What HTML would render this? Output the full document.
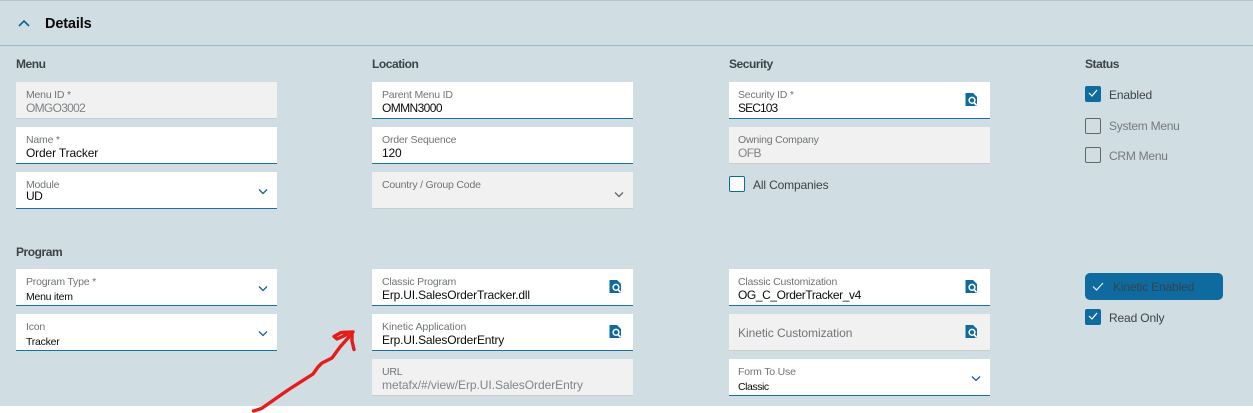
<!DOCTYPE html>
<html>
<head>
<meta charset="utf-8">
<style>
html,body{margin:0;padding:0;background:#fff;}
#p{position:relative;width:1253px;height:413px;overflow:hidden;background:#fff;font-family:"Liberation Sans",sans-serif;}
#bg{position:absolute;left:0;top:0;width:1253px;height:406px;background:#d0dde2;border-top:1px solid #b4c6ce;box-sizing:border-box;}
#hl{position:absolute;left:0;top:45px;width:1253px;height:1px;background:#9dbcc9;}
.t{position:absolute;white-space:nowrap;}
.h{font-size:12px;font-weight:bold;color:#3c4448;line-height:14px;letter-spacing:-.45px;}
.f{position:absolute;width:261px;height:37px;box-sizing:border-box;background:#fff;border-bottom:1px solid #1a6fa3;}
.f.d{background:#f1f1f1;border-bottom:1px solid #c9cccd;}
.l{position:absolute;left:10px;top:7px;font-size:10.5px;line-height:12px;color:#6f7477;white-space:nowrap;letter-spacing:-.2px;}
.v{position:absolute;left:10px;top:19px;font-size:12px;line-height:14px;color:#0c0c0c;white-space:nowrap;letter-spacing:-.18px;}
.c3 .l,.c3 .v{left:9px;}
.d .v{color:#808487;}
.s{font-size:10.5px;top:21px;letter-spacing:-.25px;}
svg.c{position:absolute;right:9px;top:16px;width:10px;height:7px;}
svg.q{position:absolute;right:13px;top:10px;width:12px;height:15px;}
.cb{position:absolute;width:16px;height:16px;box-sizing:border-box;border-radius:2px;}
.cb.on{background:#0f6a9f;}
.cb.off{border:1px solid #666;}
.cb.blue{border:1px solid #0f6a9f;background:#fff;}
.cb svg{position:absolute;left:3px;top:3px;width:10px;height:8px;}
.lb{position:absolute;font-size:12px;line-height:14px;color:#3d4347;white-space:nowrap;letter-spacing:-.15px;}
.lb.g{color:#75797c;letter-spacing:-.25px;}
</style>
</head>
<body>
<div id="p">
<div id="bg"></div>
<div id="hl"></div>
<svg style="position:absolute;left:18px;top:19px" width="12" height="8" viewBox="0 0 12 8"><path d="M1 7L6 2L11 7" fill="none" stroke="#14638f" stroke-width="1.6"/></svg>
<div class="t" style="left:45px;top:15px;font-size:14.5px;line-height:18px;font-weight:bold;color:#0a0a0a;letter-spacing:-.15px;">Details</div>

<div class="t h" style="left:16px;top:57px;">Menu</div>
<div class="t h" style="left:372px;top:57px;">Location</div>
<div class="t h" style="left:729px;top:57px;">Security</div>
<div class="t h" style="left:1085px;top:57px;">Status</div>
<div class="t h" style="left:16px;top:245px;">Program</div>

<div class="f d" style="left:16px;top:82px;"><div class="l">Menu ID *</div><div class="v" style="letter-spacing:-.7px">OMGO3002</div></div>
<div class="f" style="left:16px;top:127px;"><div class="l">Name *</div><div class="v" style="letter-spacing:-.15px">Order Tracker</div></div>
<div class="f" style="left:16px;top:172px;"><div class="l">Module</div><div class="v" style="top:17px;letter-spacing:-.6px">UD</div><svg class="c" viewBox="0 0 10 7"><path d="M1 1.500L5 5.500L9 1.500" fill="none" stroke="#14638f" stroke-width="1.300"/></svg></div>

<div class="f" style="left:372px;top:82px;"><div class="l">Parent Menu ID</div><div class="v" style="letter-spacing:-.6px">OMMN3000</div></div>
<div class="f" style="left:372px;top:127px;"><div class="l">Order Sequence</div><div class="v">120</div></div>
<div class="f d" style="left:372px;top:172px;"><div class="l">Country / Group Code</div><svg class="c" style="top:19px" viewBox="0 0 10 7"><path d="M1 1.500L5 5.500L9 1.500" fill="none" stroke="#666" stroke-width="1.300"/></svg></div>

<div class="f c3" style="left:729px;top:82px;"><div class="l">Security ID *</div><div class="v" style="letter-spacing:-.9px">SEC103</div><svg class="q" viewBox="0 0 12 15"><path d="M0.500 1H8L12 5V14H0.500Z" fill="#0f6a9f"/><circle cx="7" cy="8.300" r="2.900" fill="#0f6a9f" stroke="#fff" stroke-width="1.500"/><path d="M9 10.500L11.700 13.400" stroke="#fff" stroke-width="1.700"/></svg></div>
<div class="f d c3" style="left:729px;top:127px;"><div class="l">Owning Company</div><div class="v" style="letter-spacing:-.6px">OFB</div></div>

<div class="cb blue" style="left:729px;top:176px;"></div>
<div class="lb" style="left:753px;top:178px;">All Companies</div>

<div class="cb on" style="left:1085px;top:86px;"><svg viewBox="0 0 10 8"><path d="M1 4L4 7L9 1" fill="none" stroke="#fff" stroke-width="1.200"/></svg></div>
<div class="lb" style="left:1109px;top:88px;">Enabled</div>
<div class="cb off" style="left:1085px;top:118px;"></div>
<div class="lb g" style="left:1109px;top:119px;">System Menu</div>
<div class="cb off" style="left:1085px;top:147px;"></div>
<div class="lb g" style="left:1109px;top:149px;">CRM Menu</div>

<div class="f" style="left:16px;top:269px;"><div class="l">Program Type *</div><div class="v s">Menu item</div><svg class="c" viewBox="0 0 10 7"><path d="M1 1.500L5 5.500L9 1.500" fill="none" stroke="#14638f" stroke-width="1.300"/></svg></div>
<div class="f" style="left:16px;top:314px;"><div class="l">Icon</div><div class="v s">Tracker</div><svg class="c" viewBox="0 0 10 7"><path d="M1 1.500L5 5.500L9 1.500" fill="none" stroke="#14638f" stroke-width="1.300"/></svg></div>

<div class="f" style="left:372px;top:269px;"><div class="l">Classic Program</div><div class="v">Erp.UI.SalesOrderTracker.dll</div><svg class="q" style="right:12px" viewBox="0 0 12 15"><path d="M0.500 1H8L12 5V14H0.500Z" fill="#0f6a9f"/><circle cx="7" cy="8.300" r="2.900" fill="#0f6a9f" stroke="#fff" stroke-width="1.500"/><path d="M9 10.500L11.700 13.400" stroke="#fff" stroke-width="1.700"/></svg></div>
<div class="f" style="left:372px;top:314px;"><div class="l" style="letter-spacing:-.05px">Kinetic Application</div><div class="v">Erp.UI.SalesOrderEntry</div><svg class="q" style="right:12px" viewBox="0 0 12 15"><path d="M0.500 1H8L12 5V14H0.500Z" fill="#0f6a9f"/><circle cx="7" cy="8.300" r="2.900" fill="#0f6a9f" stroke="#fff" stroke-width="1.500"/><path d="M9 10.500L11.700 13.400" stroke="#fff" stroke-width="1.700"/></svg></div>
<div class="f d" style="left:372px;top:359px;"><div class="l">URL</div><div class="v" style="letter-spacing:-.05px">metafx/#/view/Erp.UI.SalesOrderEntry</div></div>

<div class="f c3" style="left:729px;top:269px;"><div class="l">Classic Customization</div><div class="v" style="letter-spacing:-.4px">OG_C_OrderTracker_v4</div><svg class="q" viewBox="0 0 12 15"><path d="M0.500 1H8L12 5V14H0.500Z" fill="#0f6a9f"/><circle cx="7" cy="8.300" r="2.900" fill="#0f6a9f" stroke="#fff" stroke-width="1.500"/><path d="M9 10.500L11.700 13.400" stroke="#fff" stroke-width="1.700"/></svg></div>
<div class="f d c3" style="left:729px;top:314px;"><div class="v" style="top:12px;color:#6f7477;letter-spacing:-.05px;">Kinetic Customization</div><svg class="q" viewBox="0 0 12 15"><path d="M0.500 1H8L12 5V14H0.500Z" fill="#0f6a9f"/><circle cx="7" cy="8.300" r="2.900" fill="#0f6a9f" stroke="#fff" stroke-width="1.500"/><path d="M9 10.500L11.700 13.400" stroke="#fff" stroke-width="1.700"/></svg></div>
<div class="f c3" style="left:729px;top:359px;"><div class="l">Form To Use</div><div class="v s" style="letter-spacing:-.45px">Classic</div><svg class="c" viewBox="0 0 10 7"><path d="M1 1.500L5 5.500L9 1.500" fill="none" stroke="#14638f" stroke-width="1.300"/></svg></div>

<div style="position:absolute;left:1085px;top:273px;width:138px;height:27px;border-radius:5px;background:#0f6a9f;"></div>
<svg style="position:absolute;left:1092px;top:282px" width="12" height="9" viewBox="0 0 12 9"><path d="M1 4.500L4.500 8L11 1" fill="none" stroke="#e8f1f5" stroke-width="1.200"/></svg>
<div class="lb" style="left:1113px;top:280px;color:#33454f;">Kinetic Enabled</div>
<div class="cb on" style="left:1085px;top:309px;"><svg viewBox="0 0 10 8"><path d="M1 4L4 7L9 1" fill="none" stroke="#fff" stroke-width="1.200"/></svg></div>
<div class="lb" style="left:1109px;top:311px;">Read Only</div>

<svg style="position:absolute;left:0;top:0" width="1253" height="413" viewBox="0 0 1253 413">
<path d="M253.500 411L261.500 408.500L288 390L313 374L318 367L322 363L332 358L340 347L352 333.500" fill="none" stroke="#e51c1c" stroke-width="3.400" stroke-linecap="round" stroke-linejoin="round"/>
<path d="M353 332L341 332.500L334 336.500L337 339L347 334.500M352 333.500L352 341L354 349.500" fill="none" stroke="#e51c1c" stroke-width="3.400" stroke-linecap="round" stroke-linejoin="round"/>
</svg>
</div>
</body>
</html>
